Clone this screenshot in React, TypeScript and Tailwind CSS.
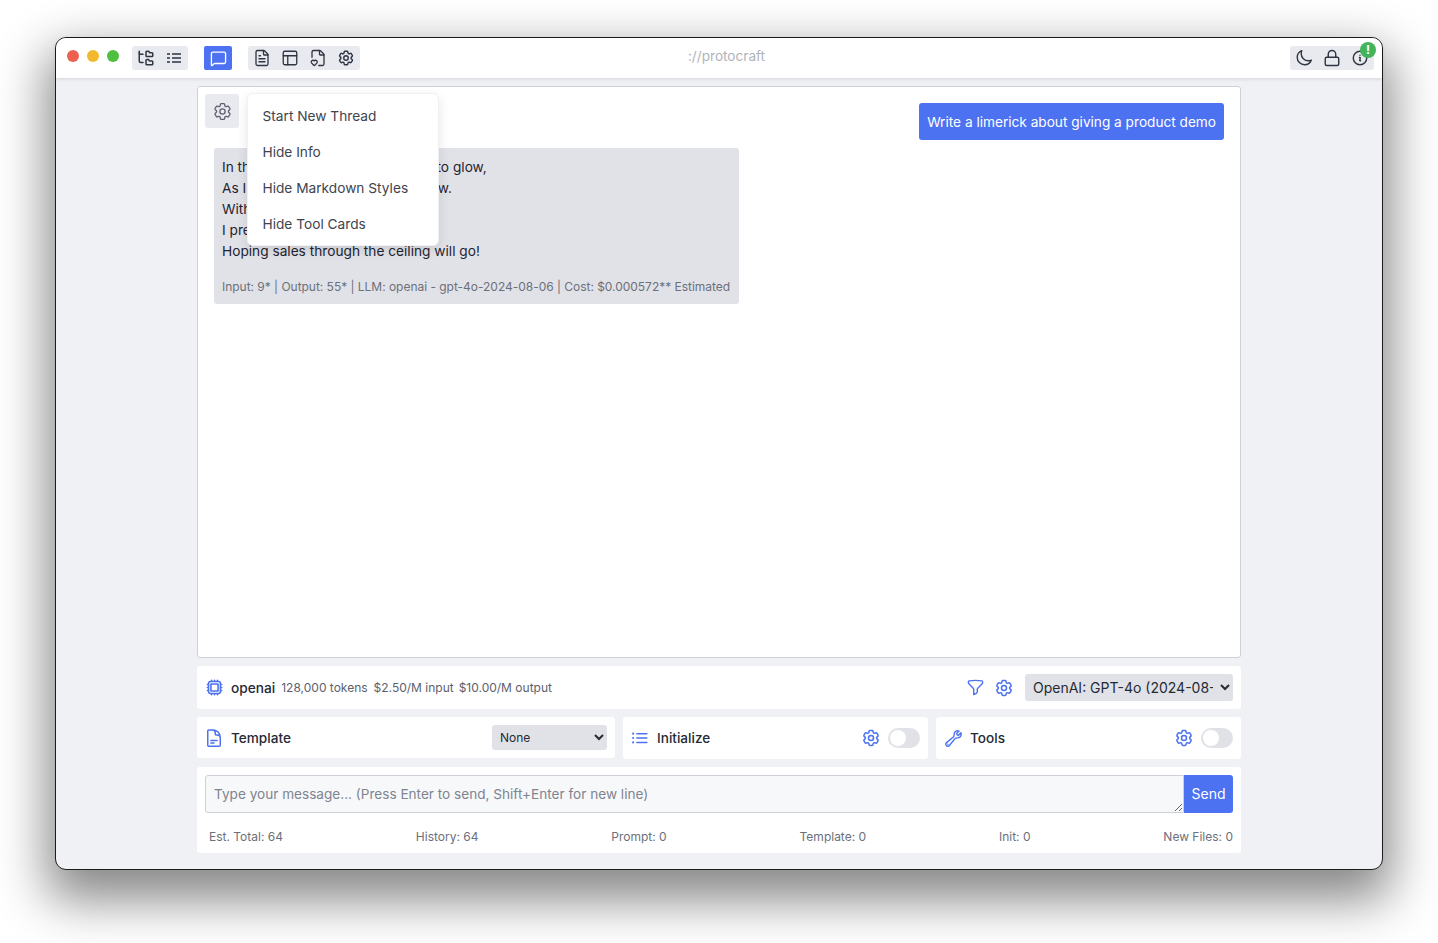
import React from "react";
import {
  HiOutlineCog6Tooth,
  HiOutlineCpuChip,
  HiOutlineDocumentText,
  HiOutlineFunnel,
  HiOutlineInformationCircle,
  HiOutlineListBullet,
  HiOutlineMoon,
  HiOutlineWrench,
} from "react-icons/hi2";
import { FileHeart, FolderTree, FileText, Layout, Lock, MessageSquare } from "lucide-react";

function Toggle() {
  return (
    <div className="w-8 h-5 rounded-full bg-[#e1e2e7] flex items-center pl-[2px] shrink-0">
      <div className="w-4 h-4 rounded-full bg-white" />
    </div>
  );
}

function DotList() {
  return (
    <svg width="14" height="10" viewBox="0 0 14 10" fill="#5a606c">
      <rect x="0" y="0" width="3" height="2" />
      <rect x="5" y="0" width="9" height="2" />
      <rect x="0" y="4" width="3" height="2" />
      <rect x="5" y="4" width="9" height="2" />
      <rect x="0" y="8" width="3" height="2" />
      <rect x="5" y="8" width="9" height="2" />
    </svg>
  );
}

function TitleBar() {
  return (
    <div className="h-[40px] bg-white flex items-center shadow-[0_1px_4px_rgba(0,0,0,0.12)] relative z-20 shrink-0 pl-[11px] pr-[8px] rounded-t-[10px]">
      <div className="flex gap-2 mr-[13px] mb-1">
        <span className="w-3 h-3 rounded-full bg-[#ec6050]" />
        <span className="w-3 h-3 rounded-full bg-[#f3b92e]" />
        <span className="w-3 h-3 rounded-full bg-[#4fbf3f]" />
      </div>
      <div className="flex h-6 rounded-[3px] bg-[#e9eaef] text-[#2f3542] w-14 items-center mr-4">
        <span className="w-7 flex justify-center"><FolderTree size={18} strokeWidth={2} /></span>
        <span className="w-7 flex justify-center"><DotList /></span>
      </div>
      <div className="w-7 h-6 rounded-[2px] bg-[#4c72f2] flex items-center justify-center text-white mr-4">
        <MessageSquare size={17} strokeWidth={1.9} />
      </div>
      <div className="flex h-6 rounded-[3px] bg-[#e9eaef] text-[#2f3542] items-center w-28">
        <span className="w-7 flex justify-center"><FileText size={18} strokeWidth={1.75} /></span>
        <span className="w-7 flex justify-center"><Layout size={18} strokeWidth={1.75} /></span>
        <span className="w-7 flex justify-center"><FileHeart size={18} strokeWidth={1.75} /></span>
        <span className="w-7 flex justify-center"><HiOutlineCog6Tooth size={18} strokeWidth={1.9} /></span>
      </div>
      <div className="flex-1 text-center text-[13.6px] text-[#b0b3ba] pr-[197px] mb-1">://protocraft</div>
      <div className="flex h-6 rounded-[3px] bg-[#e9eaef] text-[#2f3542] items-center w-[84px] relative">
        <span className="w-7 flex justify-center"><HiOutlineMoon size={18} strokeWidth={1.9} /></span>
        <span className="w-7 flex justify-center"><Lock size={18} strokeWidth={1.9} /></span>
        <span className="w-7 flex justify-center"><HiOutlineInformationCircle size={18} strokeWidth={1.9} /></span>
        <span className="absolute -top-[4px] -right-[2px] w-4 h-4 rounded-full bg-[#44b45a] text-white text-[12px] font-bold flex items-center justify-center">!</span>
      </div>
    </div>
  );
}

function Chat() {
  return (
    <div className="relative h-[572px] bg-white border border-[#cfd1d8] rounded-[3px] shrink-0">
      <div className="absolute left-[7px] top-[7px] w-[34px] h-[34px] rounded-[3px] bg-[#e9eaef] flex items-center justify-center text-[#5c616d]">
        <HiOutlineCog6Tooth size={21} />
      </div>
      <div className="absolute left-[49px] top-[6px] w-[192px] h-[153px] bg-white rounded-[6px] shadow-[0_4px_12px_rgba(0,0,0,0.1)] border border-[#f0f1f4] z-10 flex flex-col pt-[4px] text-[13.7px] text-[#40444f]">
        <div className="h-9 flex items-center pl-[14.5px]">Start New Thread</div>
        <div className="h-9 flex items-center pl-[14.5px]">Hide Info</div>
        <div className="h-9 flex items-center pl-[14.5px]">Hide Markdown Styles</div>
        <div className="h-9 flex items-center pl-[14.5px]">Hide Tool Cards</div>
      </div>
      <div className="flex justify-end pt-4 pr-4">
        <div className="h-[37px] px-2 pt-[1px] rounded-[3px] bg-[#4c72f2] text-white text-[13.65px] flex items-center">Write a limerick about giving a product demo</div>
      </div>
      <div className="ml-4 mt-2 w-[525px] h-[156px] rounded-[3px] bg-[#e1e2e7] px-2 pt-[9px]">
        <div className="text-[13.7px] leading-[21px] text-[#1f2430]">
          <div>In the boardroom, I set my slides to glow,</div>
          <div>As I prepped for this big demo flow.</div>
          <div>With a click and a grin,</div>
          <div>I presented the win,</div>
          <div>Hoping sales through the ceiling will go!</div>
        </div>
        <div className="mt-[17px] text-xs tracking-[-0.025px] leading-4 text-[#6c707b] whitespace-nowrap">Input: 9* | Output: 55* | LLM: openai - gpt-4o-2024-08-06 | Cost: $0.000572** Estimated</div>
      </div>
    </div>
  );
}

function ModelBar() {
  return (
    <div className="h-[43px] bg-white rounded-[3px] flex items-center pl-2 pr-2 shrink-0">
      <HiOutlineCpuChip size={19} strokeWidth={2} className="text-[#4c72f2] shrink-0" />
      <span className="ml-[7px] pt-[1px] text-[13.7px] font-medium text-[#262a35]">openai</span>
      <span className="ml-[6px] text-xs text-[#5c616d]">128,000 tokens</span>
      <span className="ml-[6px] text-xs text-[#5c616d]">$2.50/M input</span>
      <span className="ml-[5px] text-xs text-[#5c616d]">$10.00/M output</span>
      <div className="flex-1" />
      <HiOutlineFunnel size={19} strokeWidth={1.8} className="text-[#4c72f2]" />
      <HiOutlineCog6Tooth size={20} strokeWidth={1.8} className="ml-[9px] text-[#4c72f2]" />
      <select className="ml-[11px] w-[208px] h-[27px] rounded-[3px] bg-[#e1e2e7] text-sm text-[#262a35] pl-1 pr-1" defaultValue="a">
        <option value="a">OpenAI: GPT-4o (2024-08-06)</option>
      </select>
    </div>
  );
}

function OptionsRow() {
  return (
    <div className="flex gap-2 shrink-0">
      <div className="w-[418px] h-[41px] bg-white rounded-[3px] flex items-center pl-2 pr-2">
        <HiOutlineDocumentText size={20} strokeWidth={1.8} className="text-[#4c72f2] shrink-0 -ml-[1px]" />
        <span className="ml-[7px] pt-[1px] text-[13.6px] font-medium text-[#262a35]">Template</span>
        <div className="flex-1" />
        <select className="w-[115px] h-[25px] rounded-[3px] bg-[#e1e2e7] text-xs text-[#262a35] pl-1 pr-1" defaultValue="n">
          <option value="n">None</option>
        </select>
      </div>
      <div className="w-[305px] h-[42px] bg-white rounded-[3px] flex items-center pl-2 pr-2">
        <HiOutlineListBullet size={20} strokeWidth={1.8} className="text-[#4c72f2] shrink-0 -ml-[1px]" />
        <span className="ml-[7px] text-[13.6px] font-medium text-[#262a35]">Initialize</span>
        <div className="flex-1" />
        <HiOutlineCog6Tooth size={20} strokeWidth={1.8} className="mr-[7px] text-[#4c72f2]" />
        <Toggle />
      </div>
      <div className="w-[305px] h-[42px] bg-white rounded-[3px] flex items-center pl-2 pr-2">
        <HiOutlineWrench size={19} strokeWidth={1.8} className="text-[#4c72f2] shrink-0" />
        <span className="ml-[7px] text-[13.6px] font-medium text-[#262a35]">Tools</span>
        <div className="flex-1" />
        <HiOutlineCog6Tooth size={20} strokeWidth={1.8} className="mr-[7px] text-[#4c72f2]" />
        <Toggle />
      </div>
    </div>
  );
}

function InputCard() {
  return (
    <div className="h-[86px] bg-white rounded-[3px] px-2 pt-2 shrink-0">
      <div className="flex h-[38px]">
        <textarea
          className="flex-1 h-[38px] min-h-[38px] border border-[#cfd1d8] rounded-l-[3px] bg-[#f7f8fa] text-[13.6px] leading-5 px-2 py-2 text-[#262a35] placeholder:text-[#80848f] outline-none"
          placeholder="Type your message... (Press Enter to send, Shift+Enter for new line)"
        />
        <button className="w-[49px] h-[38px] bg-[#4c72f2] text-white text-sm rounded-r-[3px]">Send</button>
      </div>
      <div className="flex justify-between items-center h-4 mt-[16px] text-xs text-[#6c707b] pl-1">
        <span>Est. Total: 64</span>
        <span>History: 64</span>
        <span>Prompt: 0</span>
        <span>Template: 0</span>
        <span>Init: 0</span>
        <span>New Files: 0</span>
      </div>
    </div>
  );
}

export default function App() {
  return (
    <div className="w-[1438px] h-[943px] overflow-hidden bg-white pl-[55px] pt-[37px]" style={{ fontFamily: "Inter, 'Liberation Sans', sans-serif" }}>
      <div className="w-[1328px] h-[833px] rounded-[11px] border border-[#1c1c1e] bg-[#f0f1f5] flex flex-col shadow-[0_22px_50px_8px_rgba(0,0,0,0.47)]">
        <TitleBar />
        <div className="w-[1044px] ml-[141px] mt-[8px] flex flex-col gap-2">
          <Chat />
          <ModelBar />
          <OptionsRow />
          <InputCard />
        </div>
      </div>
    </div>
  );
}
